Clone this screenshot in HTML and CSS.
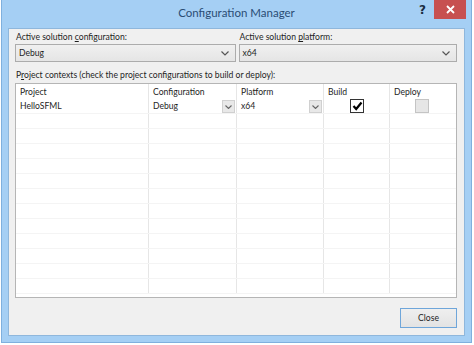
FILE: index.html
```html
<!DOCTYPE html>
<html>
<head>
<meta charset="utf-8">
<link rel="stylesheet" href="styles.css">
</head>
<body>
<div class="window">
  <div class="titlebar">
    <div class="title">Configuration Manager</div>
    <div class="help">?</div>
    <div class="close-x">
      <svg width="9" height="9" viewBox="0 0 9 9"><path d="M1 1 L8 8 M8 1 L1 8" stroke="#fff" stroke-width="1.8"/></svg>
    </div>
  </div>
  <div class="content">
    <div class="top-row">
      <div class="field field-left">
        <div class="label">Active solution <u>c</u>onfiguration:</div>
        <div class="combo"><span>Debug</span><svg class="chev" width="8" height="5" viewBox="0 0 8 5"><path d="M0.5 0.5 L4 4 L7.5 0.5" fill="none" stroke="#555" stroke-width="1.2"/></svg></div>
      </div>
      <div class="field field-right">
        <div class="label">Active solution <u>p</u>latform:</div>
        <div class="combo"><span>x64</span><svg class="chev" width="8" height="5" viewBox="0 0 8 5"><path d="M0.5 0.5 L4 4 L7.5 0.5" fill="none" stroke="#555" stroke-width="1.2"/></svg></div>
      </div>
    </div>
    <div class="label label-ctx">P<u>r</u>oject contexts (check the project configurations to build or deploy):</div>
    <div class="grid">
      <div class="row header">
        <div class="cell c1">Project</div>
        <div class="cell c2">Configuration</div>
        <div class="cell c3">Platform</div>
        <div class="cell c4">Build</div>
        <div class="cell c5">Deploy</div>
      </div>
      <div class="row">
        <div class="cell c1">HelloSFML</div>
        <div class="cell c2"><span>Debug</span><span class="cellbtn"><svg width="7" height="4" viewBox="0 0 7 4"><path d="M0.5 0.5 L3.5 3.5 L6.5 0.5" fill="none" stroke="#666" stroke-width="1.1"/></svg></span></div>
        <div class="cell c3"><span>x64</span><span class="cellbtn"><svg width="7" height="4" viewBox="0 0 7 4"><path d="M0.5 0.5 L3.5 3.5 L6.5 0.5" fill="none" stroke="#666" stroke-width="1.1"/></svg></span></div>
        <div class="cell c4 center"><span class="check on"><svg width="11" height="10" viewBox="0 0 11 10"><path d="M1.5 5 L4.2 8 L9.5 1.5" fill="none" stroke="#000" stroke-width="2.2"/></svg></span></div>
        <div class="cell c5 center"><span class="check off"></span></div>
      </div>
      <div class="row"><div class="cell c1"></div><div class="cell c2"></div><div class="cell c3"></div><div class="cell c4"></div><div class="cell c5"></div></div>
      <div class="row"><div class="cell c1"></div><div class="cell c2"></div><div class="cell c3"></div><div class="cell c4"></div><div class="cell c5"></div></div>
      <div class="row"><div class="cell c1"></div><div class="cell c2"></div><div class="cell c3"></div><div class="cell c4"></div><div class="cell c5"></div></div>
      <div class="row"><div class="cell c1"></div><div class="cell c2"></div><div class="cell c3"></div><div class="cell c4"></div><div class="cell c5"></div></div>
      <div class="row"><div class="cell c1"></div><div class="cell c2"></div><div class="cell c3"></div><div class="cell c4"></div><div class="cell c5"></div></div>
      <div class="row"><div class="cell c1"></div><div class="cell c2"></div><div class="cell c3"></div><div class="cell c4"></div><div class="cell c5"></div></div>
      <div class="row"><div class="cell c1"></div><div class="cell c2"></div><div class="cell c3"></div><div class="cell c4"></div><div class="cell c5"></div></div>
      <div class="row"><div class="cell c1"></div><div class="cell c2"></div><div class="cell c3"></div><div class="cell c4"></div><div class="cell c5"></div></div>
      <div class="row"><div class="cell c1"></div><div class="cell c2"></div><div class="cell c3"></div><div class="cell c4"></div><div class="cell c5"></div></div>
      <div class="row"><div class="cell c1"></div><div class="cell c2"></div><div class="cell c3"></div><div class="cell c4"></div><div class="cell c5"></div></div>
      <div class="row"><div class="cell c1"></div><div class="cell c2"></div><div class="cell c3"></div><div class="cell c4"></div><div class="cell c5"></div></div>
      <div class="row"><div class="cell c1"></div><div class="cell c2"></div><div class="cell c3"></div><div class="cell c4"></div><div class="cell c5"></div></div>
    </div>
    <div class="footer">
      <button class="btn">Close</button>
    </div>
  </div>
</div>
</body>
</html>
```
FILE: styles.css
```css
* { box-sizing: border-box; }
html, body { margin: 0; padding: 0; }
body {
  width: 474px;
  height: 345px;
  background: #ffffff;
  font-family: Lato, "Open Sans", sans-serif;
  font-size: 8.6px;
  color: #1e1e1e;
  overflow: hidden;
}
.window {
  margin-left: 1px;
  width: 471px;
  height: 343px;
  background: #a5cff4;
  border: 1px solid #7fb0de;
  border-top: none;
  display: flex;
  flex-direction: column;
  padding: 0 6px 6px 6px;
}
.titlebar {
  height: 28px;
  flex: none;
  display: flex;
  align-items: flex-start;
  justify-content: center;
  position: relative;
}
.title {
  font-family: Lato, "Open Sans", sans-serif;
  font-size: 11.5px;
  color: #2a4d74;
  margin-top: 6px;
}
.help {
  position: absolute;
  right: 39px;
  top: 3px;
  font-family: "DejaVu Sans", sans-serif;
  font-weight: bold;
  font-size: 12px;
  color: #1a2c40;
}
.close-x {
  position: absolute;
  right: -1px;
  top: 0;
  width: 32px;
  height: 19px;
  background: #c75050;
  display: flex;
  align-items: center;
  justify-content: center;
}
.content {
  flex: 1;
  background: #f0f0f0;
  border: 1px solid #8fb7dc;
  padding: 0 7px 0 6px;
  display: flex;
  flex-direction: column;
}
.top-row {
  display: flex;
  gap: 3px;
  margin-top: 0;
}
.field-left { width: 221px; }
.field-right { width: 219px; }
.label {
  height: 14px;
  line-height: 14px;
  padding-left: 1px;
  white-space: nowrap;
}
.label u { text-decoration: underline; text-underline-offset: 1px; }
.field .label { margin-top: 1px; }
.combo {
  height: 18px;
  border: 1px solid #acacac;
  background: linear-gradient(#f0f0f0, #e5e5e5);
  display: flex;
  align-items: center;
  justify-content: space-between;
  padding: 0 6px 0 3px;
}
.combo span { line-height: 16px; }
.label-ctx { margin-top: 6px; height: 15px; line-height: 15px; }
.grid {
  margin-top: 0;
  height: 215px;
  border: 1px solid #b5b5b5;
  background: #ffffff;
  overflow: hidden;
}
.row {
  display: flex;
  height: 15px;
  border-bottom: 1px solid #f4f4f4;
}
.row.header { border-bottom: none; }
.cell {
  height: 100%;
  border-right: 1px solid #e6e6e6;
  padding-left: 4px;
  display: flex;
  align-items: center;
  white-space: nowrap;
  position: relative;
}
.c1 { width: 133px; }
.c2 { width: 88px; }
.c3 { width: 87px; }
.c4 { width: 66px; }
.c5 { flex: 1; border-right: none; }
.center { justify-content: center; padding-left: 0; }
.c4.center { padding-left: 1px; }
.c5.center { padding-right: 3px; }
.row.header .cell { padding-top: 1px; }
.cellbtn {
  position: absolute;
  right: 1px;
  top: 1px;
  width: 13px;
  height: 13px;
  background: #e8e8e8;
  border: 1px solid #d0d0d0;
  display: flex;
  align-items: center;
  justify-content: center;
}
.check {
  width: 14px;
  height: 14px;
  display: flex;
  align-items: center;
  justify-content: center;
}
.check.on { border: 1px solid #333; background: #fff; }
.check.off { border: 1px solid #c4c4c4; background: #e6e6e6; }
.footer {
  display: flex;
  justify-content: flex-end;
  margin-top: 10px;
}
.btn {
  width: 57px;
  height: 20px;
  font-family: Lato, "Open Sans", sans-serif;
  font-size: 8.6px;
  color: #1e1e1e;
  border: 1px solid #6fa6da;
  background: linear-gradient(#efefef, #e3e3e3);
  padding: 0;
}
```
